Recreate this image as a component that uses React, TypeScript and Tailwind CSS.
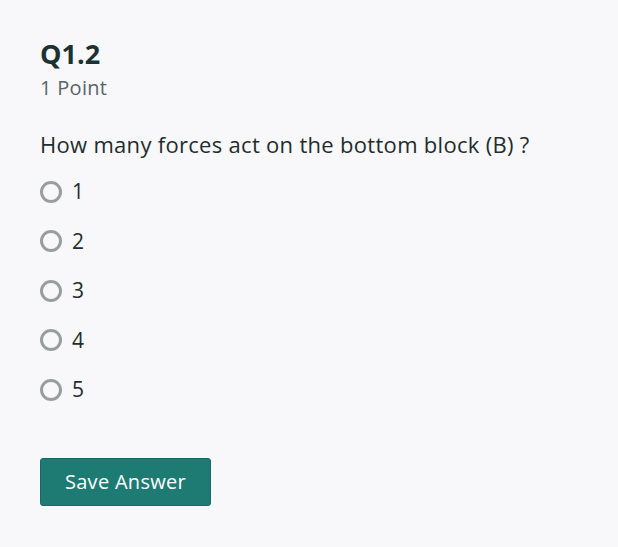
import { useState } from 'react'

const options = ['1', '2', '3', '4', '5']

export default function App() {
  const [picked, setPicked] = useState<string | null>(null)

  return (
    <div className="min-h-screen bg-[#f8f8fa] px-10 pt-[36px] font-['Open_Sans',sans-serif] text-[#1f2d2d]">
      <h2 className="text-[27px] font-bold leading-[36px] text-[#1c3232]">Q1.2</h2>
      <div className="mt-[2px] text-[20px] leading-[28px] tracking-[0.3px] text-[#59636a]">1 Point</div>

      <p className="mt-[27px] text-[22px] leading-[30px] tracking-[0.3px]">How many forces act on the bottom block (B) ?</p>

      <div className="mt-[8px] flex flex-col">
        {options.map((o) => (
          <label key={o} className="flex h-[49.5px] cursor-pointer items-center gap-[10px] text-[21px]">
            <span
              onClick={() => setPicked(o)}
              className="flex h-[22px] w-[22px] items-center justify-center rounded-full border-[3px] border-[#989e9e]"
            >
              {picked === o && <span className="h-[10px] w-[10px] rounded-full bg-[#1e7b74]" />}
            </span>
            <span>{o}</span>
          </label>
        ))}
      </div>

      <button className="mt-[43px] h-[48px] w-[171px] rounded-[3px] border border-[#166a63] bg-[#1e7b74] text-[20px] tracking-[0.3px] text-white">
        Save Answer
      </button>
    </div>
  )
}
